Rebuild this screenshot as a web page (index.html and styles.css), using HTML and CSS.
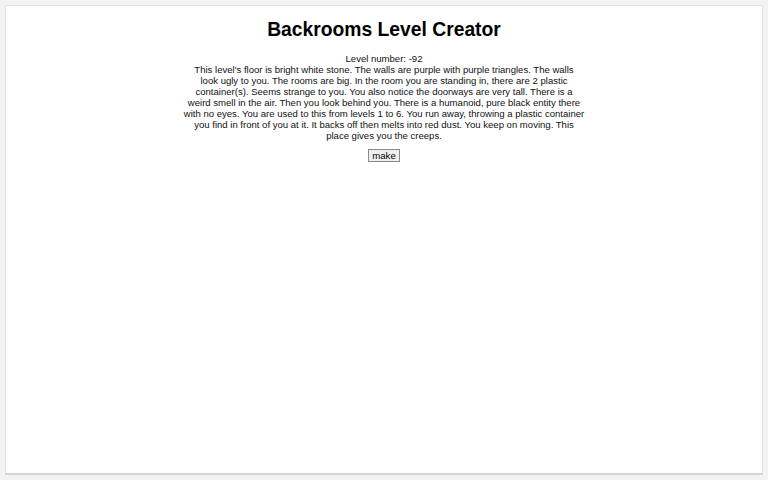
FILE: index.html
```html
<!DOCTYPE html>
<html>
<head>
<meta charset="utf-8">
<title>Backrooms Level Creator</title>
<link rel="stylesheet" href="styles.css">
</head>
<body>
<main class="card">
  <h1 class="title">Backrooms Level Creator</h1>
  <div class="output">
    <div class="level-number">Level number: -92</div>
    <div class="story">This level's floor is bright white stone. The walls are purple with purple triangles. The walls<br>look ugly to you. The rooms are big. In the room you are standing in, there are 2 plastic container(s). Seems strange to you. You also notice the doorways are very tall. There is a weird smell in the air. Then you look behind you. There is a humanoid, pure black entity there with no eyes. You are used to this from levels 1 to 6. You run away, throwing a plastic container you find in front of you at it. It backs off then melts into red dust. You keep on moving. This place gives you the creeps.</div>
  </div>
  <button class="make-btn" type="button">make</button>
</main>
</body>
</html>
```

FILE: styles.css
```css
html, body {
  margin: 0;
  height: 100%;
}

body {
  background: #f3f3f3;
  font-family: "Liberation Sans", Arial, sans-serif;
  color: #000;
  padding: 5px;
  box-sizing: border-box;
}

.card {
  box-sizing: border-box;
  height: 470px;
  background: #fff;
  border: 1px solid #e2e2e2;
  border-bottom: 2px solid #d6d6d6;
  display: flex;
  flex-direction: column;
  align-items: center;
  padding-top: 12px;
}

.title {
  margin: 0 0 12px;
  font-size: 19.3px;
  font-weight: bold;
  line-height: 23px;
}

.output {
  width: 401.5px;
  text-align: center;
  font-size: 9.56px;
  line-height: 11px;
  color: #111;
}

.make-btn {
  margin-top: 8px;
  font-family: "Liberation Sans", Arial, sans-serif;
  font-size: 9.62px;
  line-height: 11px;
  padding: 0 3px;
  background: #efefef;
  border: 1px solid #8a8a8a;
  border-radius: 0;
  color: #000;
}
```
